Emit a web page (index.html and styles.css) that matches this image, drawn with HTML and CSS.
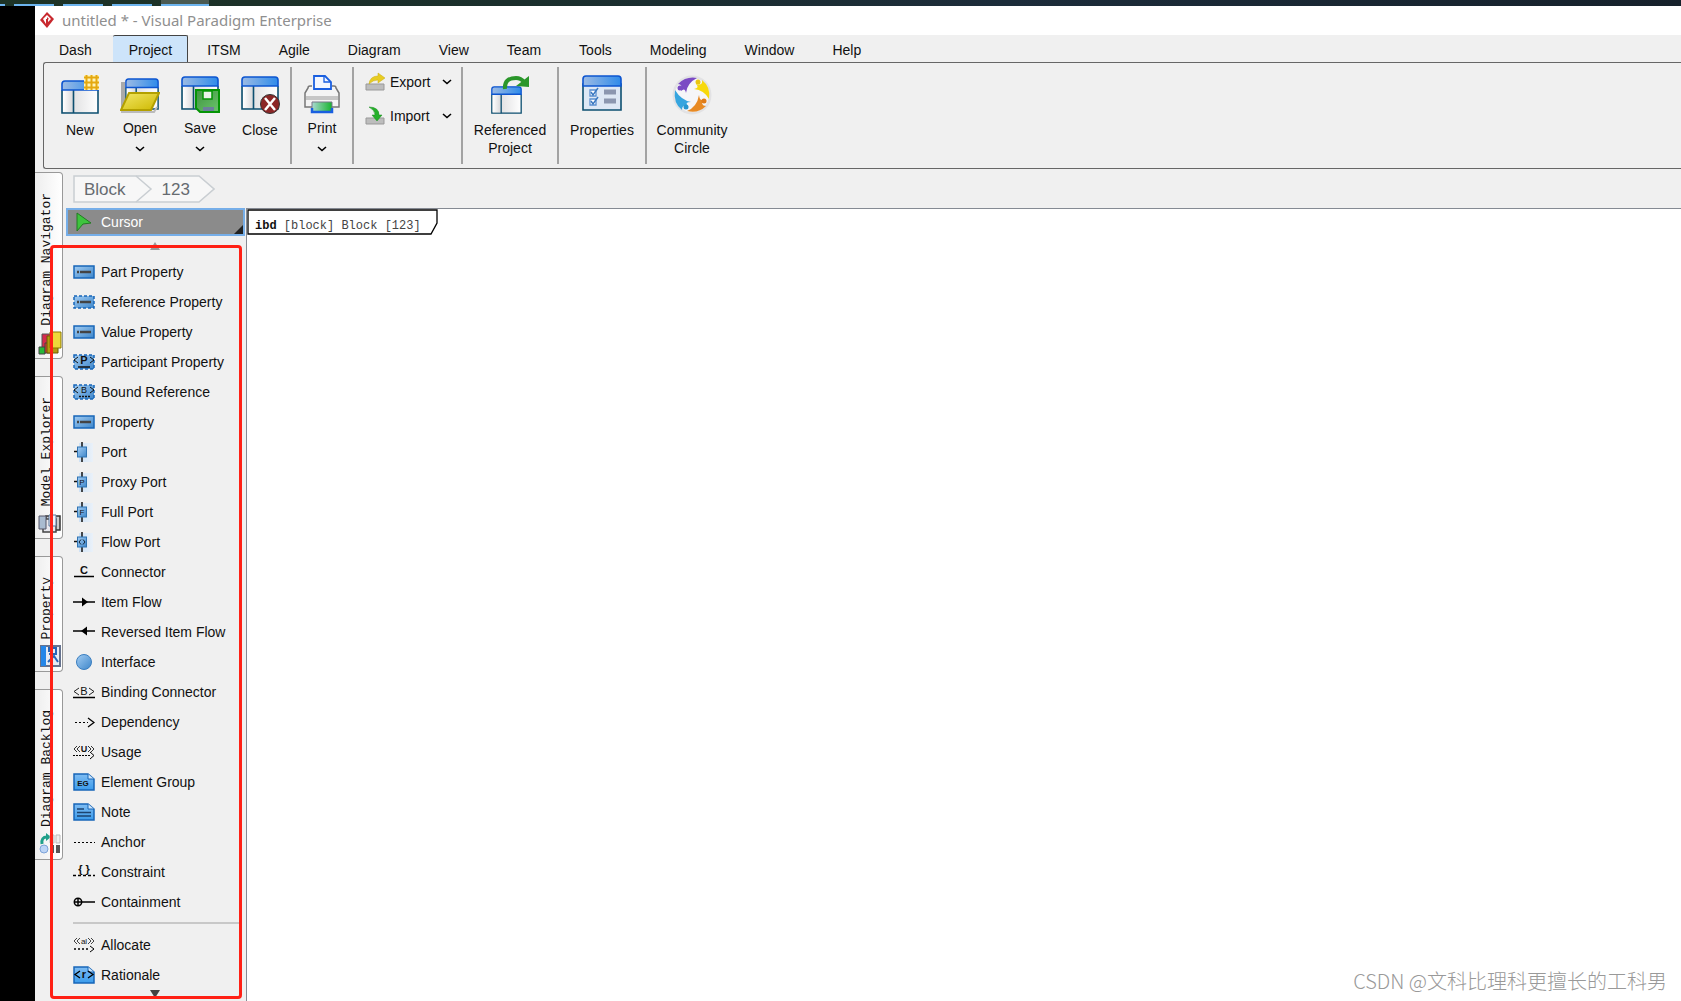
FILE: index.html
```html
<!DOCTYPE html>
<html lang="en">
<head>
<meta charset="utf-8">
<title>untitled * - Visual Paradigm Enterprise</title>
<link rel="stylesheet" href="styles.css">
</head>
<body>
<svg class="defs" aria-hidden="true">
  <defs>
    <linearGradient id="gBar" x1="0" x2="1"><stop offset="0" stop-color="#9dbbe4"/><stop offset="1" stop-color="#2e8bea"/></linearGradient>
    <linearGradient id="gPane" x1="0" x2="1"><stop offset="0" stop-color="#d4d4d6"/><stop offset="1" stop-color="#fff"/></linearGradient>
    <linearGradient id="gSide" x1="0" x2="1"><stop offset="0" stop-color="#fff"/><stop offset="1" stop-color="#d8d8da"/></linearGradient>
    <linearGradient id="gBlue" x1="0" y1="0" x2="1" y2="1"><stop offset="0" stop-color="#a3cdf3"/><stop offset="1" stop-color="#3d86ca"/></linearGradient>
    <linearGradient id="gNote" x1="0" y1="0" x2="0" y2="1"><stop offset="0" stop-color="#7fbcf2"/><stop offset="1" stop-color="#3b9cec"/></linearGradient>
    <linearGradient id="gGold" x1="0" y1="0" x2="1" y2="1"><stop offset="0" stop-color="#f3e766"/><stop offset="1" stop-color="#cdb800"/></linearGradient>
    <linearGradient id="gDisk" x1="0" y1="0" x2="1" y2="1"><stop offset="0" stop-color="#3f9440"/><stop offset="1" stop-color="#6cc46c"/></linearGradient>
    <linearGradient id="gGreen" x1="0" x2="1"><stop offset="0" stop-color="#a8d8d0"/><stop offset="1" stop-color="#16b52e"/></linearGradient>
    <linearGradient id="gFade" x1="0" x2="1"><stop offset="0" stop-color="#cfe2f5"/><stop offset="1" stop-color="#eaf1f9"/></linearGradient>
    <symbol id="win" viewBox="0 0 38 34" preserveAspectRatio="none">
      <path d="M1 10V33H37V10" fill="url(#gPane)" stroke="#0d4f70" stroke-width="1.600"/>
      <path d="M2 10H12V32H2Z" fill="url(#gSide)"/><path d="M12.500 10V33" stroke="#0d4f70" stroke-width="1.600"/>
      <path d="M1 10V4Q1 1 4 1H34Q37 1 37 4V10Z" fill="url(#gBar)" stroke="#0d55d0" stroke-width="1.600"/>
    </symbol>
    <symbol id="prop" viewBox="0 0 22 16">
      <rect x="1" y="2" width="20" height="12" fill="url(#gBlue)" stroke="#1766b8" stroke-width="1.500"/>
      <path d="M4 8H6M7 8H18" stroke="#444" stroke-width="2.400"/>
    </symbol>
    <symbol id="port" viewBox="0 0 22 20">
      <path d="M6 1H20V20H6Z" fill="url(#gFade)"/>
      <path d="M9 0V20M1 9.500H5" stroke="#111" stroke-width="1.500"/>
      <rect x="4.500" y="5" width="9" height="10" fill="url(#gBlue)" stroke="#2f74b4"/>
    </symbol>
    <symbol id="sheet" viewBox="0 0 22 18">
      <path d="M1 1H15L21 6V17H1Z" fill="url(#gNote)" stroke="#1766b8" stroke-width="1.500"/>
      <path d="M15 1V6H21" fill="#cfe6fb" stroke="#1766b8"/>
    </symbol>
    <symbol id="chev" viewBox="0 0 10 6"><path d="M1 1L5 4.500L9 1" fill="none" stroke="#000" stroke-width="1.600"/></symbol>
  </defs>
</svg>

<div class="desktop-strip"><span class="task first"></span><span class="task"></span><span class="task"></span><span class="task"></span><span class="task active"></span></div>
<div class="shell">
  <div class="gutter"></div>
  <div class="window">
    <header class="titlebar">
      <svg width="14" height="16" viewBox="0 0 14 16"><path d="M7 0L14 7L7 16L0 8Z" fill="#c8282e"/><path d="M3 7L7 3L11 7L8 10V7H6V12Z" fill="#fff"/><path d="M7 5L9 7L7 8Z" fill="#c8282e"/></svg>
      <h1>untitled * - Visual Paradigm Enterprise</h1>
    </header>

    <nav class="menu">
      <button>Dash</button><button class="selected">Project</button><button>ITSM</button><button>Agile</button><button>Diagram</button><button>View</button><button>Team</button><button>Tools</button><button>Modeling</button><button>Window</button><button>Help</button>
    </nav>

    <div class="ribbon">
      <div class="group">
        <button class="tool">
          <svg width="40" height="40" viewBox="0 0 40 40"><use href="#win" x="1" y="5" width="38" height="34"/><path d="M24 0H39V15H24Z" fill="#fff3b8"/><path d="M26.500 0V15M31.500 0V15M36.500 0V15M24 2.500H39M24 7.500H39M24 12.500H39" stroke="#e5a910" stroke-width="2"/></svg>
          <span>New</span>
        </button>
        <button class="tool drop">
          <svg width="40" height="40" viewBox="0 0 40 40"><path d="M1 7H5V34H1Z" fill="#aaa"/><use href="#win" x="5" y="3" width="34" height="32"/><path d="M9 18H39L31 35H1Z" fill="url(#gGold)" stroke="#b3a000" stroke-width="2"/><path d="M1 37H34L37 32" fill="none" stroke="#bbb" stroke-width="2"/></svg>
          <span>Open</span><svg class="chev" width="10" height="6"><use href="#chev"/></svg>
        </button>
        <button class="tool drop">
          <svg width="40" height="40" viewBox="0 0 40 40"><use href="#win" x="1" y="1" width="38" height="34"/><path d="M16 15H39V37H20L16 33Z" fill="url(#gDisk)" stroke="#059405" stroke-width="2"/><path d="M23 16H32V24H23Z" fill="#e9f3e9" stroke="#059405" stroke-width="1.500"/><path d="M23 32H34V36H23Z" fill="#6c7f9c"/></svg>
          <span>Save</span><svg class="chev" width="10" height="6"><use href="#chev"/></svg>
        </button>
        <button class="tool">
          <svg width="40" height="40" viewBox="0 0 40 40"><use href="#win" x="1" y="1" width="38" height="34"/><circle cx="30" cy="29" r="9.500" fill="#8c2626" stroke="#333"/><path d="M25 23L35 35M35 23L25 35" stroke="#fff" stroke-width="2.500"/></svg>
          <span>Close</span>
        </button>
      </div>
      <div class="group">
        <button class="tool drop">
          <svg width="36" height="40" viewBox="0 0 36 40"><path d="M8 11H6Q4 11 4 13L1 18V32H35V18L32 13Q32 11 30 11H28" fill="#f4f4f4" stroke="#777" stroke-width="1.500"/><path d="M2 21H34V25H2Z" fill="#c6c6c6"/><path d="M10 14V1H21L27 7V14Z" fill="#f3f7ff" stroke="#1a5fe0" stroke-width="1.800"/><path d="M20 1V7H27" fill="none" stroke="#1a5fe0" stroke-width="1.300"/><path d="M8 27H28V37H8Z" fill="url(#gGreen)" stroke="#778"/><path d="M8 33V37H28V33" fill="none" stroke="#1a5fe0" stroke-width="2.500"/></svg>
          <span>Print</span><svg class="chev" width="10" height="6"><use href="#chev"/></svg>
        </button>
      </div>
      <div class="group transfer">
        <button class="row-tool">
          <svg width="20" height="20" viewBox="0 0 20 20"><path d="M1 12H19V18H1Z" fill="#bdbdbd" stroke="#999"/><path d="M4 12Q5 4 13 4V1L20 6L13 11V8Q8 8 4 12Z" fill="#e8cc22" stroke="#c9ac10" stroke-width=".5"/></svg>
          <span>Export</span><svg class="chev" width="10" height="6"><use href="#chev"/></svg>
        </button>
        <button class="row-tool">
          <svg width="20" height="20" viewBox="0 0 20 20"><path d="M1 12H19V18H1Z" fill="#bdbdbd" stroke="#999"/><path d="M4 1Q14 1 14 9H17L12 15L7 9H10Q10 4 4 1Z" fill="#25b02a" stroke="#188a1c" stroke-width=".5"/></svg>
          <span>Import</span><svg class="chev" width="10" height="6"><use href="#chev"/></svg>
        </button>
      </div>
      <div class="group">
        <button class="tool reference">
          <svg width="40" height="40" viewBox="0 0 40 40"><use href="#win" x="1" y="11" width="31" height="28"/><path d="M15 14Q14 3 26 3Q31 3 34 7" fill="none" stroke="#2a962a" stroke-width="4"/><path d="M39 1V12L26 11Z" fill="#2a962a"/></svg>
          <span>Referenced<br>Project</span>
        </button>
      </div>
      <div class="group">
        <button class="tool properties">
          <svg width="40" height="40" viewBox="0 0 40 40"><path d="M1 9H39V35H1Z" fill="#dde8f5" stroke="#0d4f70" stroke-width="1.600"/><path d="M1 11V4Q1 1 4 1H36Q39 1 39 4V11Z" fill="url(#gBar)" stroke="#0d55d0" stroke-width="1.600"/><path d="M8 15H14V21H8ZM8 24H14V30H8Z" fill="#fff" stroke="#5a8fd0" stroke-width="1.300"/><path d="M9 17L11 20L16 13M9 26L11 29L16 22" fill="none" stroke="#3a78c0" stroke-width="1.500"/><path d="M22 17H34M22 26H34" stroke="#8b97b0" stroke-width="5"/></svg>
          <span>Properties</span>
        </button>
      </div>
      <div class="group">
        <button class="tool community">
          <svg width="40" height="40" viewBox="0 0 40 40"><circle cx="20" cy="20" r="19.500" fill="#e2e2e4"/><circle cx="20" cy="20" r="17" fill="#f6f6f8"/><path d="M6 9Q14 1 25 3Q15 8 14 18Q13 12 9 16Q11 9 6 9Z" fill="#7b4bc4"/><path d="M30 5Q39 12 37 24Q32 15 22 14Q28 13 24 9Q31 11 30 5Z" fill="#f7d90c"/><path d="M34 31Q26 39 15 36Q25 32 27 20Q28 27 31 24Q28 31 34 31Z" fill="#e88a24"/><path d="M10 35Q1 28 3 15Q9 25 19 27Q12 27 16 31Q10 29 10 35Z" fill="#36a5df"/><circle cx="8" cy="13" r="2.500" fill="#7b4bc4"/><circle cx="26" cy="7" r="2.500" fill="#e9c510"/><circle cx="32" cy="26" r="2.500" fill="#e07c18"/><circle cx="14" cy="32" r="2.500" fill="#2796d0"/></svg>
          <span>Community<br>Circle</span>
        </button>
      </div>
    </div>

    <div class="workspace">
      <aside class="rail">
        <button class="side-tab"><span>Diagram Navigator</span>
          <svg width="24" height="24" viewBox="0 0 24 24"><path d="M4 3H14V18H4Z" fill="#d52a4f" stroke="#555"/><path d="M1 16H7V23H1Z" fill="#26b838" stroke="#444"/><path d="M7 12H13V22H7Z" fill="#e03c30" stroke="#444"/><path d="M9 5H20V22H9Z" fill="#b39a10" stroke="#6b5c00"/><path d="M12 1H23V17H12Z" fill="#eed83a" stroke="#8a7800"/></svg></button>
        <button class="side-tab"><span>Model Explorer</span>
          <svg width="24" height="24" viewBox="0 0 24 24"><path d="M8 5H22V19H8Z" fill="#ccc" stroke="#333" stroke-width="1.500"/><path d="M5 8H18V21H5Z" fill="#e8e8ee" stroke="#444" stroke-width="1.500"/><path d="M1 5H8V18H1Z" fill="#a9bbd0" stroke="#556"/><path d="M11 4H18V15H11Z" fill="#eef3fc" stroke="#56749a"/></svg></button>
        <button class="side-tab"><span>Property</span>
          <svg width="24" height="24" viewBox="0 0 24 24"><path d="M3 2H22V22H3Z" fill="#e6ebf4" stroke="#66738f" stroke-width="2"/><path d="M3 2H8V22H3Z" fill="#2586e8"/><path d="M11 8V4H18V10H11M10 18L16 12L20 18" fill="none" stroke="#2766b8" stroke-width="2"/></svg></button>
        <button class="side-tab"><span>Diagram Backlog</span>
          <svg width="24" height="24" viewBox="0 0 24 24"><path d="M4 12Q3 5 9 5" fill="none" stroke="#1fa08a" stroke-width="3"/><path d="M8 1L13 5L8 9Z" fill="#1fa08a"/><circle cx="6" cy="17" r="4" fill="#bcd4f6" stroke="#7da3d8"/><path d="M12 13H16V21H12ZM18 13H22V21H18Z" fill="#555"/><path d="M12 3H16V11H12ZM18 3H22V11H18Z" fill="#eee" stroke="#bbb"/></svg></button>
      </aside>

      <main class="main">
        <nav class="breadcrumb" aria-label="Breadcrumb">
          <svg class="crumb-shape" width="142" height="28" viewBox="0 0 142 28"><path d="M1 1H126L141 14L126 27H1Z" fill="#f7f7f7" stroke="#c9ced2" stroke-width="1.500"/><path d="M63 1L78 14L63 27" fill="none" stroke="#c9ced2" stroke-width="1.500"/></svg>
          <a href="#block">Block</a><a href="#block-123">123</a>
        </nav>
        <div class="editor">
          <section class="palette">
            <button class="cursor"><svg width="16" height="20" viewBox="0 0 16 20"><path d="M1 1L15 11L7 12L1 19Z" fill="#3fc43f" stroke="#237a23"/></svg><span>Cursor</span><i class="corner"></i></button>
            <div class="scroll-up"></div>
            <ul class="items">
              <li><button><svg width="22" height="16"><use href="#prop"/></svg>Part Property</button></li>
              <li><button><svg width="22" height="16"><rect x="1" y="2" width="20" height="12" fill="url(#gBlue)" stroke="#1766b8" stroke-width="1.500" stroke-dasharray="3 2"/><path d="M4 8H6M7 8H18" stroke="#444" stroke-width="2.400"/></svg>Reference Property</button></li>
              <li><button><svg width="22" height="16"><use href="#prop"/></svg>Value Property</button></li>
              <li><button><svg width="22" height="16"><rect x="1" y="1" width="20" height="14" fill="url(#gBlue)" stroke="#1766b8" stroke-width="1.500" stroke-dasharray="3 2"/><text x="11" y="10" class="glyph big bold">P</text><path d="M5 3L1 6L5 9M17 3L21 6L17 9" fill="none" stroke="#111"/><path d="M5 13H17" stroke="#111" stroke-width="1.500"/></svg>Participant Property</button></li>
              <li><button><svg width="22" height="16"><rect x="1" y="1" width="20" height="14" fill="url(#gBlue)" stroke="#1766b8" stroke-width="1.500" stroke-dasharray="3 2"/><text x="11" y="9" class="glyph">B</text><path d="M5 3L1 6L5 9M17 3L21 6L17 9" fill="none" stroke="#111"/><path d="M6 12.500H17" stroke="#111" stroke-width="1.500" stroke-dasharray="2 1"/></svg>Bound Reference</button></li>
              <li><button><svg width="22" height="16"><use href="#prop"/></svg>Property</button></li>
              <li><button><svg width="22" height="20"><use href="#port"/></svg>Port</button></li>
              <li><button><svg width="22" height="20"><use href="#port"/><text x="9" y="13" class="glyph small">P</text></svg>Proxy Port</button></li>
              <li><button><svg width="22" height="20"><use href="#port"/><text x="9" y="13" class="glyph small">F</text></svg>Full Port</button></li>
              <li><button><svg width="22" height="20"><use href="#port"/><path d="M8 7.500L6 10L8 12.500M10 7.500L12 10L10 12.500" fill="none" stroke="#123"/></svg>Flow Port</button></li>
              <li><button><svg width="22" height="16"><text x="11" y="10" class="glyph big bold">C</text><path d="M1 12.500H21" stroke="#000" stroke-width="1.500"/></svg>Connector</button></li>
              <li><button><svg width="22" height="16"><path d="M0 8H22" stroke="#000" stroke-width="1.500"/><path d="M9 3.500L15 8L9 12.500Z"/></svg>Item Flow</button></li>
              <li><button><svg width="22" height="16"><path d="M0 7H22" stroke="#000" stroke-width="1.500"/><path d="M14 2.500L8 7L14 11.500Z"/></svg>Reversed Item Flow</button></li>
              <li><button><svg width="22" height="18"><circle cx="11" cy="9" r="7.500" fill="url(#gBlue)" stroke="#3b7fc0"/></svg>Interface</button></li>
              <li><button><svg width="22" height="16"><text x="11" y="11" class="glyph big">B</text><path d="M6 4L1 7.500L6 11M16 4L21 7.500L16 11" fill="none" stroke="#222"/><path d="M0 13.500H22" stroke="#000" stroke-width="1.500"/></svg>Binding Connector</button></li>
              <li><button><svg width="22" height="16"><path d="M2 8.500H15" stroke="#000" stroke-width="1.200" stroke-dasharray="2 2"/><path d="M15 4L21 8.500L15 13" fill="none" stroke="#000" stroke-width="1.300"/></svg>Dependency</button></li>
              <li><button><svg width="22" height="16"><path d="M4 2L1 5L4 8M7 2L4 5L7 8M15 2L18 5L15 8M18 2L21 5L18 8" fill="none" stroke="#333"/><text x="11" y="8" class="glyph bold">U</text><path d="M0 11.500H17" stroke="#000" stroke-dasharray="2 1"/><path d="M17 8L21 11.500L17 15" fill="none" stroke="#000"/></svg>Usage</button></li>
              <li><button><svg width="22" height="18"><use href="#sheet"/><text x="10" y="13" class="glyph small bold">EG</text></svg>Element Group</button></li>
              <li><button><svg width="22" height="18"><use href="#sheet"/><path d="M4 6H11M4 9.500H18M4 13H18" stroke="#1c4470" stroke-width="1.300"/></svg>Note</button></li>
              <li><button><svg width="22" height="16"><path d="M1 8.500H22" stroke="#000" stroke-width="1.200" stroke-dasharray="2 2"/></svg>Anchor</button></li>
              <li><button><svg width="22" height="16"><text x="11" y="9" class="glyph big bold">{ }</text><path d="M0 11.500H22" stroke="#000" stroke-width="1.500" stroke-dasharray="3 2"/></svg>Constraint</button></li>
              <li><button><svg width="22" height="16"><circle cx="5" cy="8" r="3.700" fill="none" stroke="#000" stroke-width="1.500"/><path d="M1 8H22M5 4V12" stroke="#000" stroke-width="1.500"/></svg>Containment</button></li>
              <li class="divider" role="separator"></li>
              <li><button><svg width="22" height="16"><path d="M4 1L1 4L4 7M7 1L4 4L7 7M15 1L18 4L15 7M18 1L21 4L18 7" fill="none" stroke="#444"/><text x="11" y="7" class="glyph small">al</text><path d="M1 12H17" stroke="#000" stroke-width="1.500" stroke-dasharray="2 2"/><path d="M17 9L21 12L17 15" fill="none" stroke="#000"/></svg>Allocate</button></li>
              <li><button><svg width="22" height="18"><use href="#sheet"/><text x="11" y="12" class="glyph big bold">r</text><path d="M7 5L2 8.500L7 12M15 5L20 8.500L15 12" fill="none" stroke="#000" stroke-width="1.300"/></svg>Rationale</button></li>
            </ul>
            <div class="scroll-down"></div>
            <div class="highlight"></div>
          </section>
          <section class="canvas">
            <div class="frame-label">
              <svg width="192" height="27" viewBox="0 0 192 27"><path d="M1 1H190V14L184 25H1Z" fill="#fff" stroke="#000" stroke-width="1.300"/></svg>
              <p><b>ibd</b> [block] Block [123]</p>
            </div>
            <p class="watermark">CSDN @文科比理科更擅长的工科男</p>
          </section>
        </div>
      </main>
    </div>
  </div>
</div>
</body>
</html>
```

FILE: styles.css
```css
* { box-sizing: border-box; }

body {
  margin: 0;
  height: 100vh;
  display: flex;
  flex-direction: column;
  overflow: hidden;
  background: #f0f0f0;
  color: #111;
  font: 14px/18px "Liberation Sans", Arial, sans-serif;
}

button {
  margin: 0;
  padding: 0;
  border: 0;
  background: none;
  color: inherit;
  font: inherit;
  cursor: pointer;
}

svg { display: block; flex: none; }
p, h1, ul { margin: 0; padding: 0; }
.defs { position: absolute; width: 0; height: 0; }

.desktop-strip {
  flex: none;
  display: flex;
  gap: 9px;
  height: 6px;
  background: linear-gradient(90deg, #1d3326, #1b2f2c 30%, #1c2c3a 60%, #16212b);
}
.task { width: 40px; border-bottom: 2px solid #6db4ee; }
.task.first { width: 5px; }
.task.active { width: 48px; background: #4a5a52; }

.shell { flex: 1; display: flex; min-height: 0; }
.gutter { flex: none; width: 35px; background: #000; }
.window { flex: 1; min-width: 0; display: flex; flex-direction: column; }

.titlebar {
  flex: none;
  display: flex;
  align-items: center;
  gap: 8px;
  height: 29px;
  padding: 0 0 2px 5px;
  background: #fff;
}
.titlebar h1 {
  color: #8f8f8f;
  font: 400 15px/20px "Noto Sans", sans-serif;
}

.menu { flex: none; display: flex; height: 27px; padding-left: 5px; }
.menu button { padding: 2px 19px 0; }
.menu .selected {
  margin-left: 2px;
  padding: 1px 15px 0 16px;
  border: solid #444;
  border-width: 1px 1px 0 0;
  border-radius: 2px 2px 0 0;
  background: #cde4fa;
}

.ribbon {
  flex: none;
  display: flex;
  height: 107px;
  margin-left: 8px;
  padding: 4px 0 4px 6px;
  border: solid #666;
  border-width: 1px 0 1px 1px;
  border-radius: 3px 0 0 3px;
}
.group { display: flex; border-right: 2px solid #a3a3a3; }
.group:last-child { border-right: 0; }
.tool {
  display: flex;
  flex-direction: column;
  align-items: center;
  width: 60px;
  padding-top: 8px;
}
.tool span { margin-top: 6px; }
.tool.drop span { margin-top: 4px; }
.tool.drop .chev { margin-top: 9px; }
.reference { width: 94px; }
.properties { width: 86px; }
.community { width: 90px; }
.transfer { flex-direction: column; gap: 14px; padding: 5px 0 0 11px; width: 109px; }
.row-tool { display: flex; align-items: center; height: 20px; }
.row-tool span { width: 52px; text-align: left; padding-left: 5px; }
.row-tool .chev { margin-left: 5px; }

.workspace { flex: 1; display: flex; min-height: 0; }
.rail {
  flex: none;
  display: flex;
  flex-direction: column;
  align-items: flex-start;
  gap: 17px;
  width: 30px;
  padding-top: 3px;
}
.side-tab {
  display: flex;
  flex-direction: column;
  align-items: center;
  gap: 5px;
  width: 28px;
  padding: 20px 0 3px 2px;
  border: solid #999;
  border-width: 1px 1px 1px 0;
  border-radius: 0 4px 4px 0;
  background: linear-gradient(90deg, #eee, #fff);
}
.side-tab span {
  width: 24px;
  padding-left: 4px;
  writing-mode: vertical-rl;
  transform: rotate(180deg);
  font: 13px/18px "Liberation Mono", monospace;
}

.main { flex: 1; min-width: 0; display: flex; flex-direction: column; }
.breadcrumb {
  position: relative;
  flex: none;
  display: flex;
  gap: 36px;
  height: 39px;
  padding: 11px 0 0 19px;
}
.breadcrumb a {
  position: relative;
  color: #666b70;
  font-size: 17px;
  line-height: 20px;
  text-decoration: none;
}
.crumb-shape { position: absolute; left: 8px; top: 6px; }

.editor { flex: 1; display: flex; min-height: 0; }
.palette {
  position: relative;
  flex: none;
  display: flex;
  flex-direction: column;
  width: 181px;
}
.cursor {
  position: relative;
  display: flex;
  align-items: center;
  gap: 9px;
  width: 179px;
  height: 28px;
  margin-left: 1px;
  padding-left: 8px;
  border: 2px solid #76aee8;
  background: #8b8b8b;
  color: #fff;
}
.corner {
  position: absolute;
  right: 0;
  bottom: 0;
  border: solid transparent;
  border-width: 0 0 9px 9px;
  border-bottom-color: #222;
}
.scroll-up, .scroll-down { width: 10px; margin-left: 85px; border: 5px solid transparent; border-top: 0; }
.scroll-up { margin-top: 6px; border-bottom: 8px solid #999; }
.scroll-down { border-top: 8px solid #444; border-bottom: 0; }

.items { margin-top: 7px; list-style: none; }
.items button {
  display: flex;
  align-items: center;
  gap: 6px;
  width: 100%;
  height: 30px;
  padding-left: 8px;
  text-align: left;
}
.divider { height: 2px; margin: 5px 7px 6px 8px; background: #c8c8c8; }

.glyph { font: 9px "Liberation Sans", sans-serif; text-anchor: middle; fill: #111; }
.glyph.bold { font-weight: 700; }
.glyph.small { font-size: 8px; }
.glyph.big { font-size: 11px; }

.highlight {
  position: absolute;
  inset: 37px 4px 2px -15px;
  border: 3px solid #ff2015;
  border-radius: 4px;
  pointer-events: none;
}

.canvas {
  position: relative;
  flex: 1;
  min-width: 0;
  border: solid #858a93;
  border-width: 1px 0 0 1px;
  background: #fff;
}
.frame-label { position: relative; height: 27px; }
.frame-label svg { position: absolute; left: 0; top: 0; }
.frame-label p {
  position: relative;
  padding: 8px 0 0 8px;
  color: #444;
  font: 12px/18px "Liberation Mono", monospace;
}
.frame-label b { color: #111; }
.watermark {
  position: absolute;
  right: 14px;
  bottom: 6px;
  color: #999;
  font: 300 20px/28px "Noto Sans CJK SC", sans-serif;
}
```
